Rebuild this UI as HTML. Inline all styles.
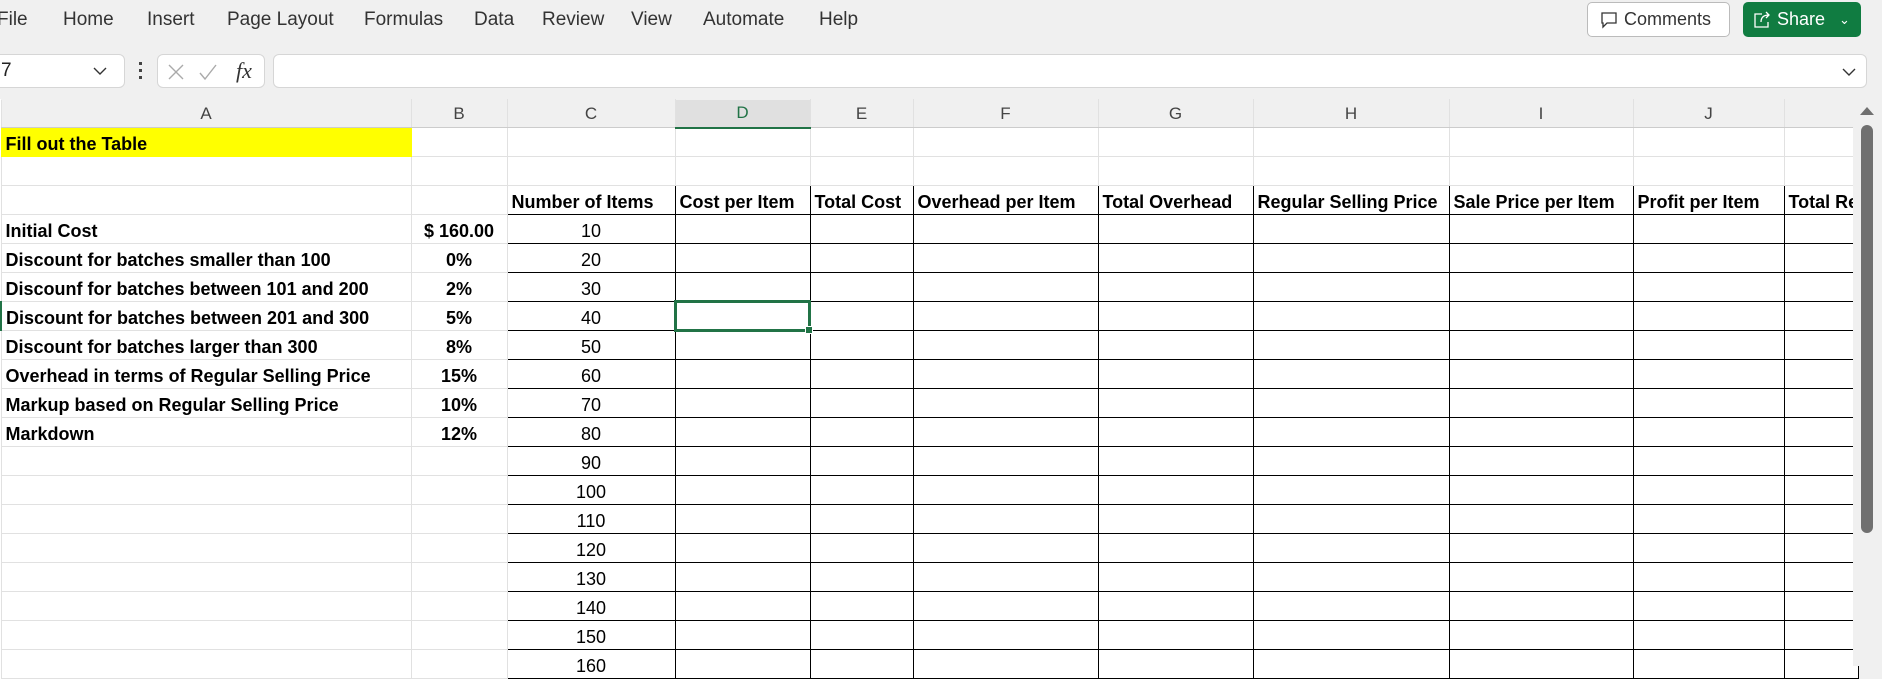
<!DOCTYPE html>
<html><head><meta charset="utf-8">
<style>
*{margin:0;padding:0;box-sizing:border-box}
body{width:1882px;height:666px;background:#f0f0f0;position:relative;overflow:hidden;font-family:"Liberation Sans",sans-serif}
.m{position:absolute;top:9px;font-size:19px;color:#333}
.btn{position:absolute;top:2px;height:35px;border-radius:5px;font-size:18px;display:flex;align-items:center}
.box{position:absolute;background:#fff;border:1px solid #d6d6d6;border-radius:6px;top:54px;height:34px}
table{position:absolute;left:0;top:99px;border-collapse:collapse;table-layout:fixed;background:#fff}
td{height:29px;border:1px solid #e1e1e1;font-weight:bold;font-size:18px;color:#000;white-space:nowrap;overflow:hidden;padding:0 0 1px 4px;line-height:22px;vertical-align:bottom}
tr.h td{height:28px;background:#f0f0f0;font-weight:normal;color:#444;font-size:17px;text-align:center;vertical-align:middle;border-color:#f0f0f0 #e1e1e1 #ccc #e1e1e1;padding:0}
td.c{text-align:center;padding-left:0}
td.n{text-align:center;padding-left:0;font-weight:normal}
td.b{border:1px solid #000}
</style></head><body>
<div class="m" style="left:-3px">File</div>
<div class="m" style="left:63px">Home</div>
<div class="m" style="left:147px">Insert</div>
<div class="m" style="left:227px">Page Layout</div>
<div class="m" style="left:364px">Formulas</div>
<div class="m" style="left:474px">Data</div>
<div class="m" style="left:542px">Review</div>
<div class="m" style="left:631px">View</div>
<div class="m" style="left:703px">Automate</div>
<div class="m" style="left:819px">Help</div>
<div class="btn" style="left:1587px;width:143px;background:#fff;border:1px solid #bbb;color:#333;padding-left:12px">
<svg width="18" height="18" viewBox="0 0 18 18" style="margin-right:6px"><path d="M2 2h14v10H7l-4 4v-4H2z" fill="none" stroke="#333" stroke-width="1.3"/></svg>Comments</div>
<div class="btn" style="left:1743px;width:118px;background:#107c41;color:#fff;padding-left:10px">
<svg width="18" height="18" viewBox="0 0 18 18" style="margin-right:6px"><path d="M9 3H2v13h13v-5M8 11c0-5 3-7 8-7M13 1l3 3-3 3" fill="none" stroke="#fff" stroke-width="1.3"/></svg>Share<span style="margin-left:14px;font-size:13px">&#8964;</span></div>
<div class="box" style="left:-8px;width:133px"><span style="position:absolute;left:8px;top:5px;font-size:19px;color:#222">7</span>
<svg style="position:absolute;left:100px;top:11px" width="14" height="10" viewBox="0 0 14 10"><path d="M1 2l6 6 6-6" fill="none" stroke="#333" stroke-width="1.4"/></svg></div>
<div style="position:absolute;left:139px;top:62px;width:3px;height:18px;background:repeating-linear-gradient(#444 0 3px,transparent 3px 7px)"></div>
<div class="box" style="left:157px;width:108px">
<svg style="position:absolute;left:8px;top:7px" width="20" height="20" viewBox="0 0 20 20"><path d="M3 3l14 14M17 3L3 17" stroke="#aaa" stroke-width="1.4"/></svg>
<svg style="position:absolute;left:40px;top:7px" width="20" height="20" viewBox="0 0 20 20"><path d="M2 11l5 6L18 3" fill="none" stroke="#aaa" stroke-width="1.4"/></svg>
<span style="position:absolute;left:78px;top:3px;font-family:'Liberation Serif',serif;font-style:italic;font-size:22px;color:#333">fx</span></div>
<div class="box" style="left:273px;width:1594px">
<svg style="position:absolute;right:10px;top:12px" width="14" height="10" viewBox="0 0 14 10"><path d="M1 2l6 6 6-6" fill="none" stroke="#333" stroke-width="1.4"/></svg></div>

<table>
<colgroup><col style="width:410px"><col style="width:96px"><col style="width:168px"><col style="width:135px"><col style="width:103px"><col style="width:185px"><col style="width:155px"><col style="width:196px"><col style="width:184px"><col style="width:151px"><col style="width:70px"></colgroup>
<tr class="h"><td>A</td><td>B</td><td>C</td><td style="background:#e0e0e0;border-bottom:2px solid #217346;color:#217346">D</td><td>E</td><td>F</td><td>G</td><td>H</td><td>I</td><td>J</td><td style="text-align:right">I</td></tr>
<tr><td style="background:#ffff00;border-color:#ffff00">Fill out the Table</td><td></td><td></td><td></td><td></td><td></td><td></td><td></td><td></td><td></td><td></td></tr>
<tr><td></td><td></td><td></td><td></td><td></td><td></td><td></td><td></td><td></td><td></td><td></td></tr>
<tr><td></td><td></td><td class="b">Number of Items</td><td class="b">Cost per Item</td><td class="b">Total Cost</td><td class="b">Overhead per Item</td><td class="b">Total Overhead</td><td class="b">Regular Selling Price</td><td class="b">Sale Price per Item</td><td class="b">Profit per Item</td><td class="b">Total Re</td></tr>
<tr><td>Initial Cost</td><td class="c">$ 160.00</td><td class="b n">10</td><td class="b"></td><td class="b"></td><td class="b"></td><td class="b"></td><td class="b"></td><td class="b"></td><td class="b"></td><td class="b"></td></tr>
<tr><td>Discount for batches smaller than 100</td><td class="c">0%</td><td class="b n">20</td><td class="b"></td><td class="b"></td><td class="b"></td><td class="b"></td><td class="b"></td><td class="b"></td><td class="b"></td><td class="b"></td></tr>
<tr><td>Discounf for batches between 101 and 200</td><td class="c">2%</td><td class="b n">30</td><td class="b"></td><td class="b"></td><td class="b"></td><td class="b"></td><td class="b"></td><td class="b"></td><td class="b"></td><td class="b"></td></tr>
<tr><td style="border-left:2px solid #217346">Discount for batches between 201 and 300</td><td class="c">5%</td><td class="b n">40</td><td class="b"></td><td class="b"></td><td class="b"></td><td class="b"></td><td class="b"></td><td class="b"></td><td class="b"></td><td class="b"></td></tr>
<tr><td>Discount for batches larger than 300</td><td class="c">8%</td><td class="b n">50</td><td class="b"></td><td class="b"></td><td class="b"></td><td class="b"></td><td class="b"></td><td class="b"></td><td class="b"></td><td class="b"></td></tr>
<tr><td>Overhead in terms of Regular Selling Price</td><td class="c">15%</td><td class="b n">60</td><td class="b"></td><td class="b"></td><td class="b"></td><td class="b"></td><td class="b"></td><td class="b"></td><td class="b"></td><td class="b"></td></tr>
<tr><td>Markup based on Regular Selling Price</td><td class="c">10%</td><td class="b n">70</td><td class="b"></td><td class="b"></td><td class="b"></td><td class="b"></td><td class="b"></td><td class="b"></td><td class="b"></td><td class="b"></td></tr>
<tr><td>Markdown</td><td class="c">12%</td><td class="b n">80</td><td class="b"></td><td class="b"></td><td class="b"></td><td class="b"></td><td class="b"></td><td class="b"></td><td class="b"></td><td class="b"></td></tr>
<tr><td></td><td></td><td class="b n">90</td><td class="b"></td><td class="b"></td><td class="b"></td><td class="b"></td><td class="b"></td><td class="b"></td><td class="b"></td><td class="b"></td></tr>
<tr><td></td><td></td><td class="b n">100</td><td class="b"></td><td class="b"></td><td class="b"></td><td class="b"></td><td class="b"></td><td class="b"></td><td class="b"></td><td class="b"></td></tr>
<tr><td></td><td></td><td class="b n">110</td><td class="b"></td><td class="b"></td><td class="b"></td><td class="b"></td><td class="b"></td><td class="b"></td><td class="b"></td><td class="b"></td></tr>
<tr><td></td><td></td><td class="b n">120</td><td class="b"></td><td class="b"></td><td class="b"></td><td class="b"></td><td class="b"></td><td class="b"></td><td class="b"></td><td class="b"></td></tr>
<tr><td></td><td></td><td class="b n">130</td><td class="b"></td><td class="b"></td><td class="b"></td><td class="b"></td><td class="b"></td><td class="b"></td><td class="b"></td><td class="b"></td></tr>
<tr><td></td><td></td><td class="b n">140</td><td class="b"></td><td class="b"></td><td class="b"></td><td class="b"></td><td class="b"></td><td class="b"></td><td class="b"></td><td class="b"></td></tr>
<tr><td></td><td></td><td class="b n">150</td><td class="b"></td><td class="b"></td><td class="b"></td><td class="b"></td><td class="b"></td><td class="b"></td><td class="b"></td><td class="b"></td></tr>
<tr><td></td><td></td><td class="b n">160</td><td class="b"></td><td class="b"></td><td class="b"></td><td class="b"></td><td class="b"></td><td class="b"></td><td class="b"></td><td class="b"></td></tr>
</table>
<div style="position:absolute;left:674px;top:300px;width:137px;height:32px;border:3px solid #217346"></div>
<div style="position:absolute;left:805px;top:326px;width:8px;height:8px;background:#217346;border:1px solid #fff"></div>
<div style="position:absolute;left:1853px;top:99px;width:29px;height:567px;background:#f0f0f0"></div>
<svg style="position:absolute;left:1859px;top:106px" width="16" height="10" viewBox="0 0 16 10"><path d="M8 1L15 9H1z" fill="#707070"/></svg>
<div style="position:absolute;left:1861px;top:125px;width:12px;height:408px;background:#707070;border-radius:6px"></div>
</body></html>
